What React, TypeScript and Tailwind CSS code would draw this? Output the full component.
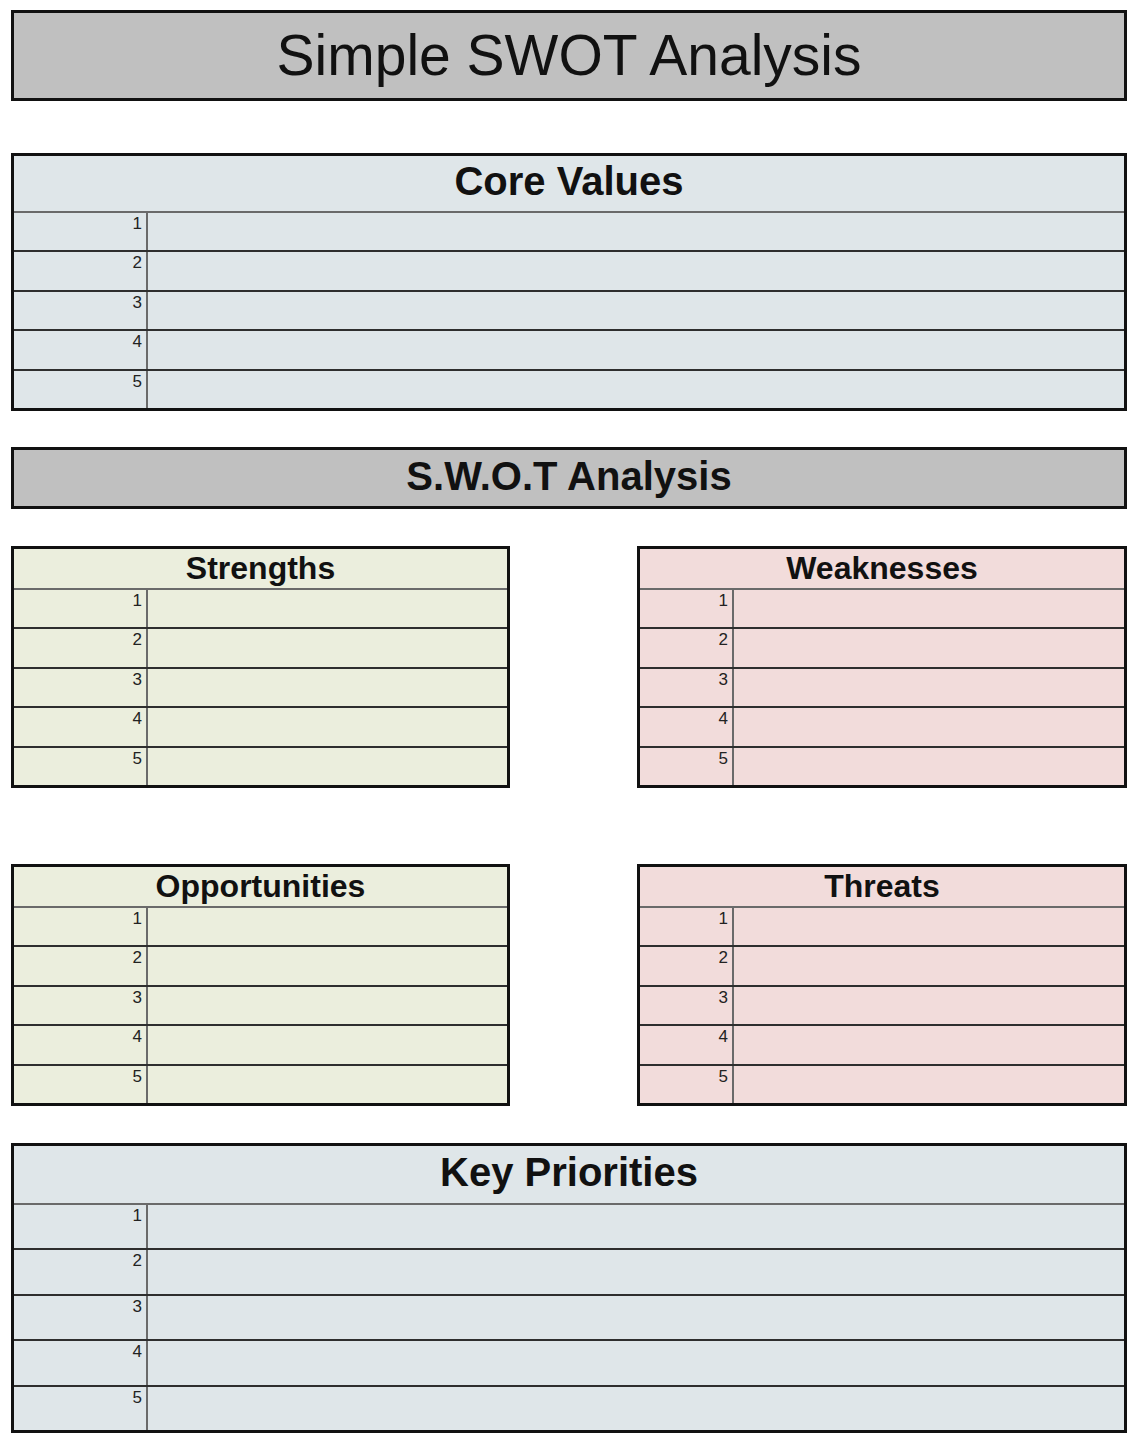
import React from 'react';

type Tone = 'blue' | 'green' | 'pink';

const toneBg: Record<Tone, string> = {
  blue: 'bg-[#dfe6e9]',
  green: 'bg-[#ebeedd]',
  pink: 'bg-[#f2dcdb]',
};

function ListBox({
  title,
  tone,
  height,
  headerH,
  headerText,
  numW,
}: {
  title: string;
  tone: Tone;
  height: string;
  headerH: string;
  headerText: string;
  numW: string;
}) {
  return (
    <div className={`flex flex-col border-[3px] border-[#111] ${toneBg[tone]} ${height}`}>
      <div className={`flex items-center justify-center font-bold text-[#111] ${headerH} ${headerText}`}>
        {title}
      </div>
      {[1, 2, 3, 4, 5].map((n) => (
        <div
          key={n}
          className={`flex flex-1 border-t-2 ${n === 1 ? 'border-[#6a6a6a]' : 'border-[#2e2e2e]'}`}
        >
          <div className={`${numW} shrink-0 pr-[4px] pt-[2px] text-right text-[17px] leading-none text-[#222]`}>
            {n}
          </div>
          <div className="flex-1 border-l-2 border-[#6a6a6a]" />
        </div>
      ))}
    </div>
  );
}

export default function App() {
  return (
    <div
      className="w-[1140px] h-[1442px] bg-white pl-[11px] pr-[13px] pt-[10px]"
      style={{ fontFamily: '"Liberation Sans", Arial, sans-serif' }}
    >
      {/* Title */}
      <div className="flex h-[91px] items-center justify-center border-[3px] border-[#111] bg-[#c0c0c0] text-[57px] text-[#111]">
        Simple SWOT Analysis
      </div>

      <div className="mt-[52px]">
        <ListBox
          title="Core Values"
          tone="blue"
          height="h-[258px]"
          headerH="h-[55px] pb-[6px]"
          headerText="text-[40px]"
          numW="w-[132px]"
        />
      </div>

      <div className="mt-[36px] flex h-[62px] items-center justify-center border-[3px] border-[#111] bg-[#c0c0c0] pb-[4px] text-[40px] font-bold text-[#111]">
        S.W.O.T Analysis
      </div>

      <div className="mt-[37px] grid grid-cols-[499px_490px] justify-between gap-y-[76px]">
        <ListBox title="Strengths" tone="green" height="h-[242px]" headerH="h-[39px] pb-[2px]" headerText="text-[32px]" numW="w-[132px]" />
        <ListBox title="Weaknesses" tone="pink" height="h-[242px]" headerH="h-[39px] pb-[2px]" headerText="text-[32px]" numW="w-[92px]" />
        <ListBox title="Opportunities" tone="green" height="h-[242px]" headerH="h-[39px] pb-[2px]" headerText="text-[32px]" numW="w-[132px]" />
        <ListBox title="Threats" tone="pink" height="h-[242px]" headerH="h-[39px] pb-[2px]" headerText="text-[32px]" numW="w-[92px]" />
      </div>

      <div className="mt-[37px]">
        <ListBox
          title="Key Priorities"
          tone="blue"
          height="h-[290px]"
          headerH="h-[57px] pb-[6px]"
          headerText="text-[40px]"
          numW="w-[132px]"
        />
      </div>
    </div>
  );
}
